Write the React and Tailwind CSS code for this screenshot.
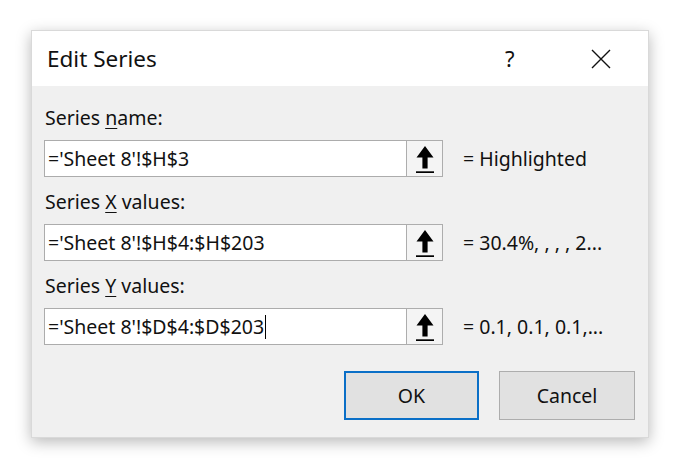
import React from "react";

const font = { fontFamily: '"Noto Sans", "Open Sans", sans-serif' };

function ArrowButton() {
  return (
    <div className="w-[37px] h-[37px] border border-[#adadad] bg-[#f4f4f4] flex items-center justify-center shrink-0">
      <svg width="22" height="30" viewBox="0 0 22 30">
        <path d="M11 2 L19.5 13.5 L13.6 13.5 L13.6 24.5 L8.4 24.5 L8.4 13.5 L2.5 13.5 Z" fill="#000" />
        <rect x="2" y="27.3" width="18" height="1.7" fill="#000" />
      </svg>
    </div>
  );
}

function Group({ label, u, rest, value, result, caret }) {
  return (
    <div className="flex flex-col">
      <div className="h-[24px] leading-[24px] text-[19.5px] text-[#111] pl-[1px]">
        {label}
        <span className="underline underline-offset-[3px] decoration-1">{u}</span>
        {rest}
      </div>
      <div className="flex items-center mt-[10px]">
        <div className="w-[362px] h-[37px] bg-white border border-[#acacac] border-r-0 flex items-center pl-[3px] text-[19.5px] text-[#111]">
          <span>{value}</span>
          {caret && <span className="inline-block w-[1px] h-[24px] bg-black ml-[1px]" />}
        </div>
        <ArrowButton />
        <div className="ml-[20px] text-[19.5px] text-[#111]">{result}</div>
      </div>
    </div>
  );
}

export default function App() {
  return (
    <div className="w-[677px] h-[471px] bg-white pt-[30px] pl-[31px]" style={font}>
      <div className="w-[618px] h-[408px] flex flex-col border border-[#d9d9d9] shadow-[0_4px_14px_rgba(0,0,0,0.28)]">
        <div className="h-[55px] bg-white flex items-center shrink-0">
          <div className="pl-[15px] text-[22.5px] text-[#111] flex-1">Edit Series</div>
          <div className="text-[22px] text-[#111] w-[20px] mr-[65px]">?</div>
          <svg width="22" height="22" viewBox="0 0 22 22" className="mr-[36px]">
            <path d="M2 2 L20 20 M20 2 L2 20" stroke="#111" strokeWidth="1.4" fill="none" />
          </svg>
        </div>
        <div className="flex-1 bg-[#f0f0f0] pl-[12px] pt-[20px] flex flex-col gap-[13px]">
          <Group label="Series " u="n" rest="ame:" value={"='Sheet 8'!$H$3"} result="= Highlighted" />
          <Group label="Series " u="X" rest=" values:" value={"='Sheet 8'!$H$4:$H$203"} result="= 30.4%, , , , 2..." />
          <Group label="Series " u="Y" rest=" values:" value={"='Sheet 8'!$D$4:$D$203"} result="= 0.1, 0.1, 0.1,..." caret />
          <div className="flex justify-end gap-[20px] pr-[13px] mt-[13px]">
            <button className="w-[135px] h-[49px] bg-[#e1e1e1] border-2 border-[#0a6fc7] text-[19.5px] text-[#111]">OK</button>
            <button className="w-[136px] h-[49px] bg-[#e1e1e1] border border-[#adadad] text-[19.5px] text-[#111]">Cancel</button>
          </div>
        </div>
      </div>
    </div>
  );
}
